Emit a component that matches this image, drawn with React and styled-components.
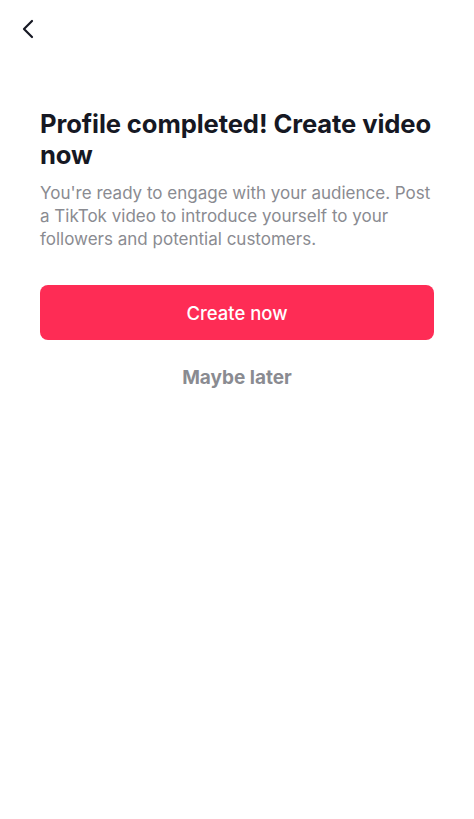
import React from "react";
import styled, { createGlobalStyle } from "styled-components";

const GlobalStyle = createGlobalStyle`
  html, body {
    margin: 0;
    padding: 0;
    background: #ffffff;
    font-family: Inter, "Noto Sans", sans-serif;
  }
`;

const Page = styled.div`
  width: 474px;
  min-height: 819px;
  display: flex;
  flex-direction: column;
  box-sizing: border-box;
`;

const TopBar = styled.div`
  height: 60px;
  display: flex;
  align-items: center;
  padding-left: 18px;
`;

const BackButton = styled.button`
  border: none;
  background: none;
  padding: 0;
  width: 22px;
  height: 22px;
  display: flex;
  align-items: center;
  justify-content: center;
  margin-top: -2px;
  cursor: pointer;
`;

const Content = styled.div`
  padding: 48px 40px 0 40px;
  display: flex;
  flex-direction: column;
`;

const Title = styled.h1`
  margin: 0;
  font-size: 25.6px;
  line-height: 31px;
  font-weight: 700;
  color: #161823;
  letter-spacing: -0.1px;
`;

const Description = styled.p`
  margin: 12px 0 0 0;
  font-size: 17px;
  line-height: 23px;
  font-weight: 400;
  color: #8a8b91;
`;

const PrimaryButton = styled.button`
  margin-top: 34px;
  height: 55px;
  width: 100%;
  border: none;
  border-radius: 8px;
  background: #fe2c55;
  color: #ffffff;
  font-family: inherit;
  font-size: 18.5px;
  font-weight: 500;
  cursor: pointer;
`;

const TextButton = styled.button`
  margin-top: 21px;
  align-self: center;
  border: none;
  background: none;
  padding: 0;
  color: #8a8b91;
  font-family: inherit;
  font-size: 19px;
  font-weight: 700;
  line-height: 34px;
  cursor: pointer;
`;

export default function App() {
  return (
    <>
      <GlobalStyle />
      <Page>
        <TopBar>
          <BackButton aria-label="Back">
            <svg width="20" height="20" viewBox="0 0 20 20" fill="none">
              <path
                d="M13 2 L5 10 L13 18"
                stroke="#161823"
                strokeWidth="2.2"
                strokeLinecap="round"
                strokeLinejoin="round"
              />
            </svg>
          </BackButton>
        </TopBar>
        <Content>
          <Title>Profile completed! Create video now</Title>
          <Description>
            You're ready to engage with your audience. Post a TikTok video to
            introduce yourself to your followers and potential customers.
          </Description>
          <PrimaryButton>Create now</PrimaryButton>
          <TextButton>Maybe later</TextButton>
        </Content>
      </Page>
    </>
  );
}
